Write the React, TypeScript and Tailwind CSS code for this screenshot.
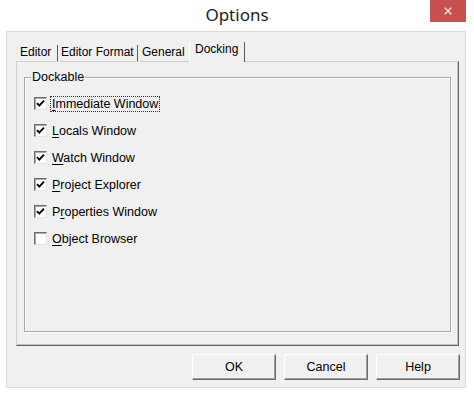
import { X } from 'lucide-react';

const items = [
    { pre: '', key: 'I', post: 'mmediate Window', checked: true, focus: true },
    { pre: '', key: 'L', post: 'ocals Window', checked: true },
    { pre: '', key: 'W', post: 'atch Window', checked: true },
    { pre: '', key: 'P', post: 'roject Explorer', checked: true },
    { pre: 'P', key: 'r', post: 'operties Window', checked: true },
    { pre: '', key: 'O', post: 'bject Browser', checked: false },
];

function CheckBox({ checked }: { checked: boolean }) {
    return (
        <div className="w-[13px] h-[13px] bg-white border-t border-l border-[#6d6d6d] border-r border-b border-r-[#e3e3e3] border-b-[#e3e3e3] shadow-[inset_1px_1px_0_#a8a8a8] flex items-center justify-center shrink-0">
            {checked && (
                <svg width="9" height="9" viewBox="0 0 9 9">
                    <path d="M1 4.2 L3.3 6.6 L8 1.6" fill="none" stroke="#000" strokeWidth="1.9" />
                </svg>
            )}
        </div>
    );
}

function Button({ label }: { label: string }) {
    return (
        <button className="w-[84px] h-[26px] bg-[#f0f0f0] border border-t-white border-l-white border-r-[#6a6a6a] border-b-[#6a6a6a] shadow-[inset_-1px_-1px_0_#a0a0a0] text-[12.5px] text-black flex items-center justify-center">
            {label}
        </button>
    );
}

export default function App() {
    const tabs = [
        { label: 'Editor', w: 'w-[42px]', pl: 'pl-[4px]', sep: 'border-r' },
        { label: 'Editor Format', w: 'w-[80px]', pl: 'pl-[3px]', sep: 'border-r' },
        { label: 'General', w: 'w-[51px]', pl: 'pl-[4px]', sep: 'border-r-0' },
    ];

    return (
        <div className="w-[474px] h-[395px] bg-white relative overflow-hidden" style={{ fontFamily: '"Liberation Sans", Arial, sans-serif' }}>
            {/* Title bar */}
            <div className="h-[31px] flex items-center justify-center">
                <span className="text-[17px] text-[#1e1e1e] pb-[1px]" style={{ fontFamily: '"Noto Sans", "Open Sans", sans-serif' }}>
                    Options
                </span>
            </div>
            <div className="absolute top-0 left-[430px] w-[36px] h-[22px] bg-[#c8504f] flex items-center justify-center">
                <X className="w-[12px] h-[12px] text-white" strokeWidth={2.25} />
            </div>

            {/* Dialog client */}
            <div className="ml-[6px] w-[460px] h-[357px] bg-[#f0f0f0] border border-[#dcdcdc] flex flex-col">
                {/* Tabs */}
                <div className="ml-[9px] mt-[10px] h-[19px] flex items-end text-[12px] text-black">
                    {tabs.map((t) => (
                        <div key={t.label} className={`${t.w} ${t.pl} ${t.sep} h-[16px] border-[#5a5a5a] leading-[15px] whitespace-nowrap`}>
                            {t.label}
                        </div>
                    ))}
                    <div className="w-[56px] h-[20px] pl-[5px] border-l border-white border-r border-r-[#5a5a5a] leading-[15px] -mb-[1px] bg-[#f0f0f0] relative z-10">
                        Docking
                    </div>
                </div>

                {/* Tab panel */}
                <div className="ml-[9px] w-[443px] h-[285px] border border-t-[#d2d2d2] border-l-[#d2d2d2] border-r-[#626262] border-b-[#626262] shadow-[inset_-1px_-1px_0_#c4c4c4] pt-[15px] pl-[7px]">
                    {/* Group box */}
                    <div className="w-[427px] h-[255px] border border-[#a9a9a9] shadow-[inset_1px_1px_0_#fff,1px_1px_0_#fff] relative">
                        <span className="absolute -top-[9px] left-[6px] px-[1px] bg-[#f0f0f0] text-[12.5px] leading-[16px] text-black">
                            Dockable
                        </span>
                        <div className="pt-[12px] pl-[9px] flex flex-col">
                            {items.map((it) => (
                                <div key={it.post} className="h-[27px] flex items-center">
                                    <CheckBox checked={it.checked} />
                                    <span
                                        className={`ml-[3px] text-[12.5px] leading-[14px] text-black px-[1px] border ${it.focus ? 'border-dotted border-[#333]' : 'border-transparent'}`}
                                    >
                                        {it.pre}
                                        <span className="underline underline-offset-2">{it.key}</span>
                                        {it.post}
                                    </span>
                                </div>
                            ))}
                        </div>
                    </div>
                </div>

                {/* Buttons */}
                <div className="mt-[8px] pr-[5px] flex justify-end gap-[8px]">
                    <Button label="OK" />
                    <Button label="Cancel" />
                    <Button label="Help" />
                </div>
            </div>
        </div>
    );
}
